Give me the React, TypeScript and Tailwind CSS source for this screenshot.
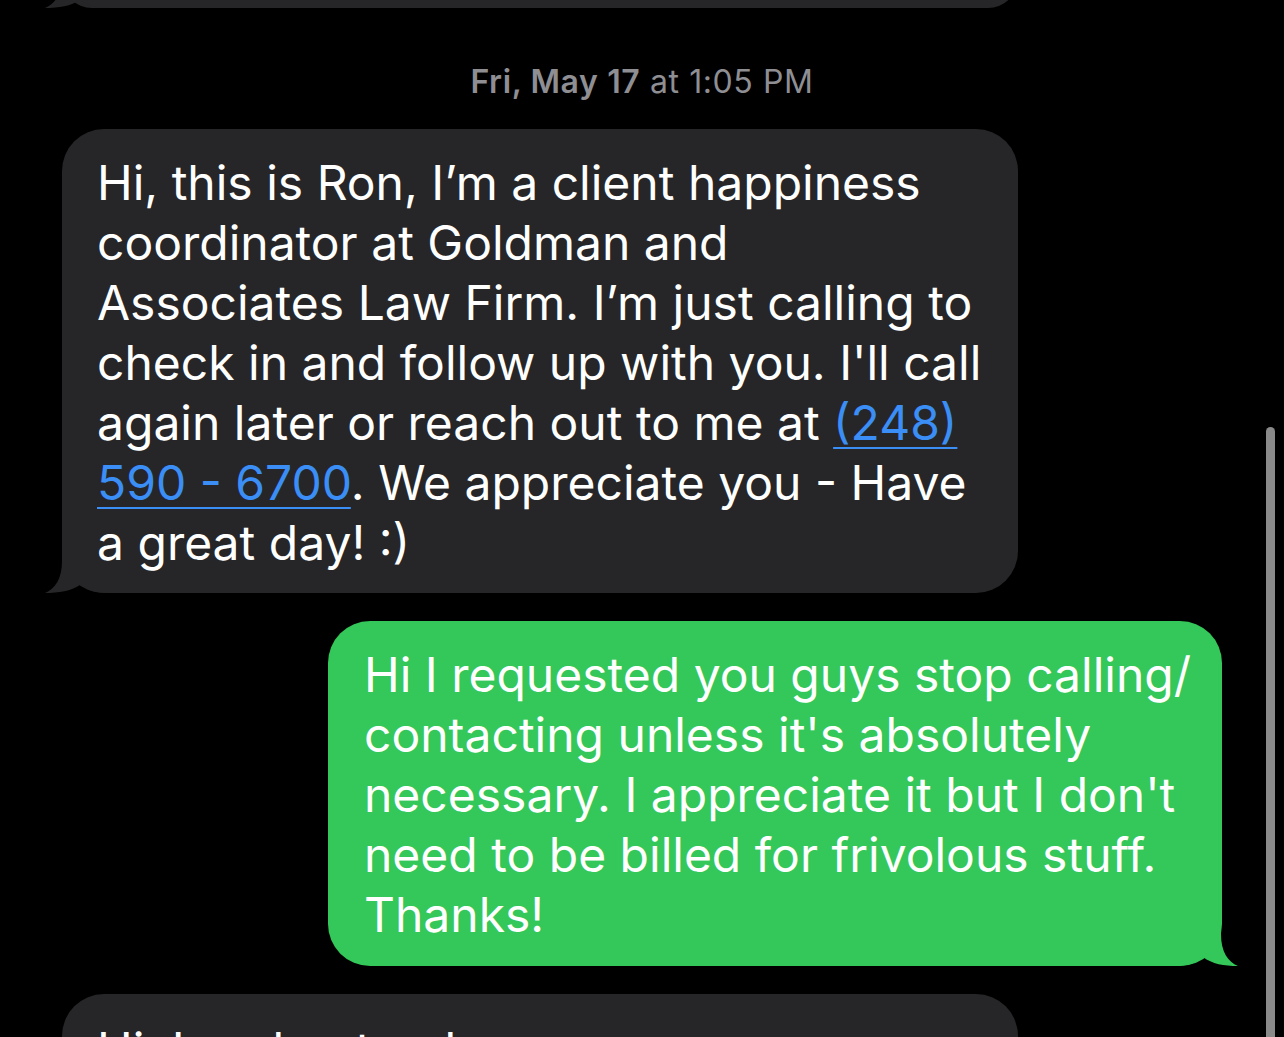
import React from "react";

// Message thread (dark mode), lines broken by hand to match the source wrap
const INCOMING_LINES = [
  "Hi, this is Ron, I\u2019m a client happiness",
  "coordinator at Goldman and",
  "Associates Law Firm. I\u2019m just calling to",
  "check in and follow up with you. I'll call",
];

const OUTGOING_LINES = [
  "Hi I requested you guys stop calling/",
  "contacting unless it's absolutely",
  "necessary. I appreciate it but I don't",
  "need to be billed for frivolous stuff.",
  "Thanks!",
];

// bubble tail in the bottom-left corner; svg left edge sits 17px outside the bubble
function LeftTail({ color }: { color: string }) {
  return (
    <svg className="absolute -left-[17px] bottom-0" width="64" height="48" viewBox="0 0 64 48">
      <path
        d="M17 0 L17 16 C17 34 10 44 0 48 C14 48 26 46 35 40 C42 45 50 48 64 48 L64 0 Z"
        fill={color}
      />
    </svg>
  );
}

function RightTail({ color }: { color: string }) {
  return (
    <svg className="absolute -right-[16px] bottom-0" width="64" height="48" viewBox="0 0 64 48">
      <path
        d="M47 0 L47 16 C47 34 54 44 64 48 C50 48 38 46 29 39 C22 45 14 48 0 48 L0 0 Z"
        fill={color}
      />
    </svg>
  );
}

export default function App() {
  const font = { fontFamily: "Inter, 'Noto Sans', sans-serif" };
  const link = "text-[#3a8ef5] underline decoration-2 underline-offset-[7px]";
  return (
    <div className="w-[1284px] h-[1037px] bg-black overflow-hidden relative" style={font}>
      {/* previous incoming bubble, mostly scrolled off */}
      <div className="relative ml-[62px] w-[956px] h-[60px] -mt-[52px] bg-[#262628] rounded-[42px]">
        <LeftTail color="#262628" />
      </div>

      <div className="pt-[56px] text-center text-[32px] leading-[36px] text-[#8e8e93] tracking-[0.6px]">
        <span className="font-semibold">Fri, May 17</span> at 1:05 PM
      </div>

      <div className="relative ml-[62px] mt-[29px] w-[956px] bg-[#262628] rounded-[42px] pl-[35px] pt-[24px] pb-[20px]">
        <LeftTail color="#262628" />
        <div className="relative text-white text-[48px] leading-[60px] whitespace-nowrap">
          {INCOMING_LINES.map((l) => (
            <div key={l}>{l}</div>
          ))}
          <div>
            again later or reach out to me at <span className={link}>(248)</span>
          </div>
          <div>
            <span className={link}>590 - 6700</span>. We appreciate you - Have
          </div>
          <div>a great day! :)</div>
        </div>
      </div>

      <div className="relative ml-[328px] mt-[28px] w-[894px] bg-[#34c759] rounded-[42px] pl-[36px] pt-[24px] pb-[21px]">
        <RightTail color="#34c759" />
        <div className="relative text-white text-[48px] leading-[60px] whitespace-nowrap">
          {OUTGOING_LINES.map((l) => (
            <div key={l}>{l}</div>
          ))}
        </div>
      </div>

      <div className="relative ml-[62px] mt-[28px] w-[956px] h-[200px] bg-[#262628] rounded-[42px] pl-[35px] pt-[26px]">
        <div className="text-white text-[48px] leading-[60px] whitespace-nowrap">Hi, I understand</div>
      </div>

      {/* scroll indicator */}
      <div className="absolute left-[1266px] top-[427px] w-[9px] h-[640px] rounded-full bg-[#8a8a8a]" />
    </div>
  );
}
